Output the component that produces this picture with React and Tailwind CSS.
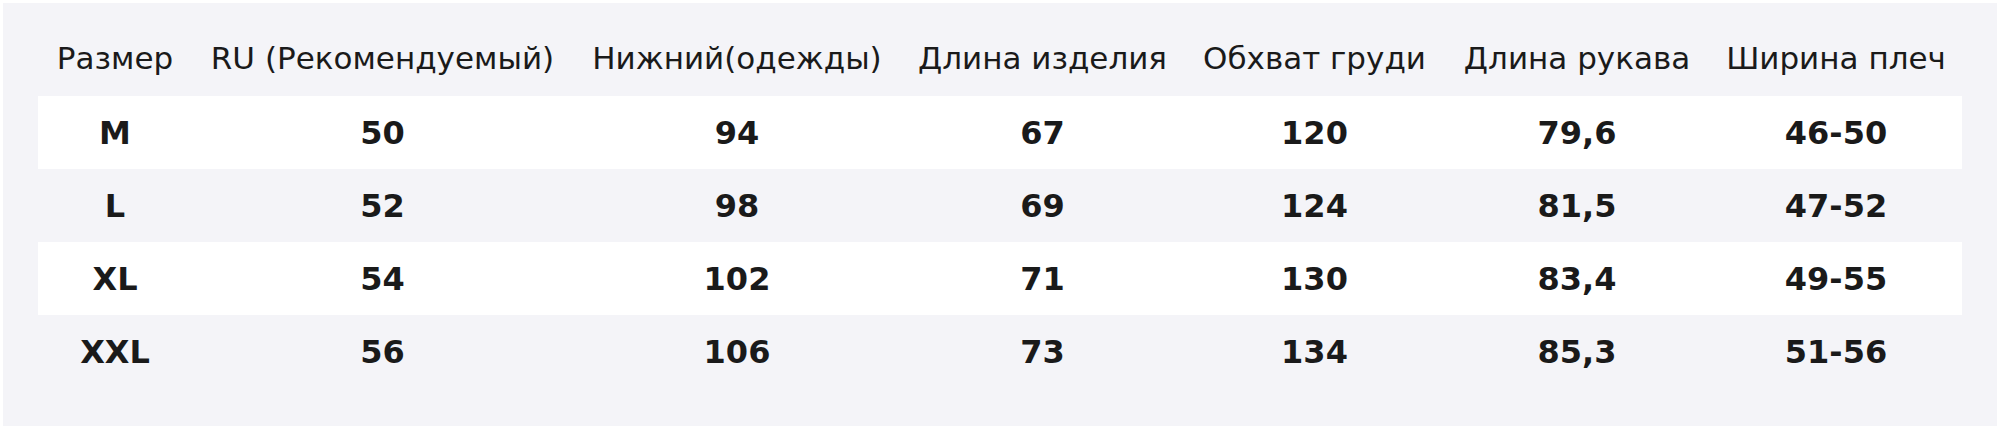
import React from "react";

const headers = [
  "Размер",
  "RU (Рекомендуемый)",
  "Нижний(одежды)",
  "Длина изделия",
  "Обхват груди",
  "Длина рукава",
  "Ширина плеч",
];

const rows = [
  ["M", "50", "94", "67", "120", "79,6", "46-50"],
  ["L", "52", "98", "69", "124", "81,5", "47-52"],
  ["XL", "54", "102", "71", "130", "83,4", "49-55"],
  ["XXL", "56", "106", "73", "134", "85,3", "51-56"],
];

const cols = "grid grid-cols-[154px_381px_328px_283px_261px_264px_254px]";

export default function App() {
  return (
    <div className="bg-white p-[3px] font-['DejaVu_Sans',sans-serif] text-[#1a1a1a]">
      <div className="bg-[#f4f4f8] px-[35px] pt-[37px] pb-[38px]">
        <div className={cols}>
          {headers.map((h) => (
            <div key={h} className="text-center text-[31px] leading-[36px] pb-[20px] whitespace-nowrap">
              {h}
            </div>
          ))}
        </div>
        {rows.map((row, i) => (
          <div key={row[0]} className={`${cols} h-[73px] ${i % 2 === 0 ? "bg-white" : ""}`}>
            {row.map((cell, j) => (
              <div key={j} className="flex items-center justify-center text-[32px] font-bold whitespace-nowrap">
                {cell}
              </div>
            ))}
          </div>
        ))}
      </div>
    </div>
  );
}
